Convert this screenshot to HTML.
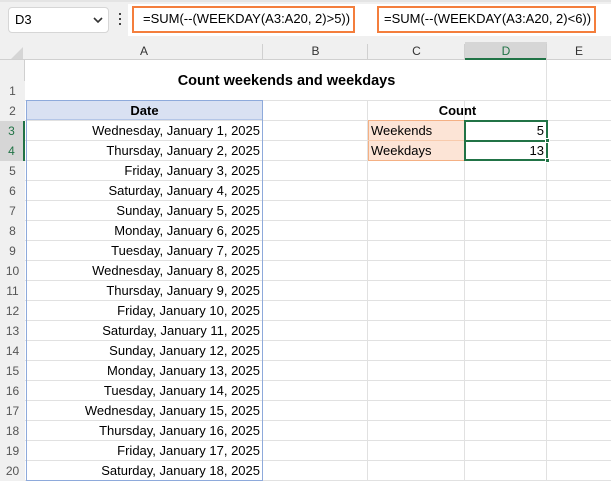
<!DOCTYPE html>
<html><head><style>
*{margin:0;padding:0;box-sizing:border-box}
body{width:611px;height:481px;overflow:hidden;background:#fff;font-family:"Liberation Sans",sans-serif;position:relative;color:#000}
.a{position:absolute}
.cell{position:absolute;font-size:13px;line-height:20px;white-space:nowrap}
.vl{position:absolute;width:1px;background:#e1e1e1}
.hl{position:absolute;height:1px;background:#e1e1e1}
.rh{position:absolute;left:0;width:25px;text-align:center;font-size:12px;color:#555;line-height:20px;background:#f0f0f0}
</style></head><body>
<div class="a" style="left:0;top:0;width:611px;height:42px;background:#f0f0f0"></div>
<div class="a" style="left:0;top:0;width:611px;height:2px;background:#e4e4e4"></div>
<div class="a" style="left:8px;top:7px;width:101px;height:26px;background:#fff;border:1px solid #d6d6d6;border-radius:4px"></div>
<div class="cell" style="left:15px;top:10px;font-size:13px">D3</div>
<svg class="a" style="left:93px;top:16px" width="10" height="8"><path d="M1 2 L5 6 L9 2" stroke="#333" stroke-width="1.6" fill="none"/></svg>
<div class="a" style="left:119px;top:13px;width:2px;height:2px;background:#444"></div>
<div class="a" style="left:119px;top:18px;width:2px;height:2px;background:#444"></div>
<div class="a" style="left:119px;top:23px;width:2px;height:2px;background:#444"></div>
<div class="a" style="left:128px;top:4px;width:483px;height:32px;background:#fff"></div>
<div class="a" style="left:132px;top:6px;width:223px;height:27px;border:2px solid #f47e3c"></div>
<div class="cell" style="left:143px;top:9px">=SUM(--(WEEKDAY(A3:A20, 2)&gt;5))</div>
<div class="a" style="left:377px;top:6px;width:219px;height:27px;border:2px solid #f47e3c"></div>
<div class="cell" style="left:384px;top:9px">=SUM(--(WEEKDAY(A3:A20, 2)&lt;6))</div>

<div class="a" style="left:0;top:42px;width:611px;height:18px;background:#f0f0f0;border-bottom:1px solid #d0d0d0"></div>
<svg class="a" style="left:8px;top:47px" width="16" height="12"><path d="M15 0 L15 12 L3 12 Z" fill="#d5d5d5"/></svg>
<div class="a" style="left:465px;top:42px;width:82px;height:18px;background:#d6d6d6;border-bottom:2px solid #217346"></div>
<div class="cell" style="left:25px;top:41px;width:238px;text-align:center;font-size:12px;color:#333">A</div>
<div class="cell" style="left:263px;top:41px;width:105px;text-align:center;font-size:12px;color:#333">B</div>
<div class="cell" style="left:368px;top:41px;width:97px;text-align:center;font-size:12px;color:#333">C</div>
<div class="cell" style="left:465px;top:41px;width:82px;text-align:center;font-size:12px;color:#217346">D</div>
<div class="cell" style="left:547px;top:41px;width:64px;text-align:center;font-size:12px;color:#333">E</div>
<div class="vl" style="left:262px;top:44px;height:16px;background:#d0d0d0"></div>
<div class="vl" style="left:367px;top:44px;height:16px;background:#d0d0d0"></div>
<div class="vl" style="left:464px;top:44px;height:16px;background:#d0d0d0"></div>
<div class="vl" style="left:546px;top:44px;height:16px;background:#d0d0d0"></div>

<div class="a" style="left:0;top:60px;width:25px;height:421px;background:#f0f0f0;border-right:1px solid #d0d0d0"></div>

<div class="vl" style="left:262px;top:60px;height:421px"></div>
<div class="vl" style="left:367px;top:60px;height:421px"></div>
<div class="vl" style="left:464px;top:60px;height:421px"></div>
<div class="vl" style="left:546px;top:60px;height:421px"></div>
<div class="hl" style="left:0;top:100px;width:611px"></div>
<div class="hl" style="left:0;top:120px;width:611px"></div>
<div class="hl" style="left:0;top:140px;width:611px"></div>
<div class="hl" style="left:0;top:160px;width:611px"></div>
<div class="hl" style="left:0;top:180px;width:611px"></div>
<div class="hl" style="left:0;top:200px;width:611px"></div>
<div class="hl" style="left:0;top:220px;width:611px"></div>
<div class="hl" style="left:0;top:240px;width:611px"></div>
<div class="hl" style="left:0;top:260px;width:611px"></div>
<div class="hl" style="left:0;top:280px;width:611px"></div>
<div class="hl" style="left:0;top:300px;width:611px"></div>
<div class="hl" style="left:0;top:320px;width:611px"></div>
<div class="hl" style="left:0;top:340px;width:611px"></div>
<div class="hl" style="left:0;top:360px;width:611px"></div>
<div class="hl" style="left:0;top:380px;width:611px"></div>
<div class="hl" style="left:0;top:400px;width:611px"></div>
<div class="hl" style="left:0;top:420px;width:611px"></div>
<div class="hl" style="left:0;top:440px;width:611px"></div>
<div class="hl" style="left:0;top:460px;width:611px"></div>
<div class="hl" style="left:0;top:480px;width:611px"></div>
<div class="a" style="left:26px;top:60px;width:585px;height:40px;background:#fff"></div>
<div class="vl" style="left:546px;top:60px;height:40px"></div>

<div class="rh" style="top:81px">1</div>
<div class="rh" style="top:101px">2</div>
<div class="rh" style="top:121px;background:#d6d6d6;color:#217346;border-right:2px solid #217346">3</div>
<div class="rh" style="top:141px;background:#d6d6d6;color:#217346;border-right:2px solid #217346">4</div>
<div class="rh" style="top:161px">5</div>
<div class="rh" style="top:181px">6</div>
<div class="rh" style="top:201px">7</div>
<div class="rh" style="top:221px">8</div>
<div class="rh" style="top:241px">9</div>
<div class="rh" style="top:261px">10</div>
<div class="rh" style="top:281px">11</div>
<div class="rh" style="top:301px">12</div>
<div class="rh" style="top:321px">13</div>
<div class="rh" style="top:341px">14</div>
<div class="rh" style="top:361px">15</div>
<div class="rh" style="top:381px">16</div>
<div class="rh" style="top:401px">17</div>
<div class="rh" style="top:421px">18</div>
<div class="rh" style="top:441px">19</div>
<div class="rh" style="top:461px">20</div>

<div class="cell" style="left:26px;top:71px;width:521px;text-align:center;font-weight:bold;font-size:14.5px">Count weekends and weekdays</div>

<div class="a" style="left:26px;top:100px;width:237px;height:381px;border:1px solid #8eaadb"></div>
<div class="a" style="left:27px;top:101px;width:235px;height:19px;background:#d9e1f2;border-bottom:1px solid #b4c6e7"></div>
<div class="cell" style="left:26px;top:101px;width:237px;text-align:center;font-weight:bold">Date</div>

<div class="cell" style="left:26px;top:121px;width:234px;text-align:right">Wednesday, January 1, 2025</div>
<div class="cell" style="left:26px;top:141px;width:234px;text-align:right">Thursday, January 2, 2025</div>
<div class="cell" style="left:26px;top:161px;width:234px;text-align:right">Friday, January 3, 2025</div>
<div class="cell" style="left:26px;top:181px;width:234px;text-align:right">Saturday, January 4, 2025</div>
<div class="cell" style="left:26px;top:201px;width:234px;text-align:right">Sunday, January 5, 2025</div>
<div class="cell" style="left:26px;top:221px;width:234px;text-align:right">Monday, January 6, 2025</div>
<div class="cell" style="left:26px;top:241px;width:234px;text-align:right">Tuesday, January 7, 2025</div>
<div class="cell" style="left:26px;top:261px;width:234px;text-align:right">Wednesday, January 8, 2025</div>
<div class="cell" style="left:26px;top:281px;width:234px;text-align:right">Thursday, January 9, 2025</div>
<div class="cell" style="left:26px;top:301px;width:234px;text-align:right">Friday, January 10, 2025</div>
<div class="cell" style="left:26px;top:321px;width:234px;text-align:right">Saturday, January 11, 2025</div>
<div class="cell" style="left:26px;top:341px;width:234px;text-align:right">Sunday, January 12, 2025</div>
<div class="cell" style="left:26px;top:361px;width:234px;text-align:right">Monday, January 13, 2025</div>
<div class="cell" style="left:26px;top:381px;width:234px;text-align:right">Tuesday, January 14, 2025</div>
<div class="cell" style="left:26px;top:401px;width:234px;text-align:right">Wednesday, January 15, 2025</div>
<div class="cell" style="left:26px;top:421px;width:234px;text-align:right">Thursday, January 16, 2025</div>
<div class="cell" style="left:26px;top:441px;width:234px;text-align:right">Friday, January 17, 2025</div>
<div class="cell" style="left:26px;top:461px;width:234px;text-align:right">Saturday, January 18, 2025</div>

<div class="cell" style="left:368px;top:101px;width:179px;text-align:center;font-weight:bold">Count</div>
<div class="a" style="left:368px;top:120px;width:97px;height:41px;background:#fce4d6;border:1px solid #f4b084"></div>
<div class="hl" style="left:368px;top:140px;width:97px;background:#f8cbad"></div>
<div class="cell" style="left:371px;top:121px">Weekends</div>
<div class="cell" style="left:371px;top:141px">Weekdays</div>
<div class="a" style="left:464px;top:120px;width:84px;height:22px;border:2px solid #217346"></div>
<div class="a" style="left:464px;top:140px;width:84px;height:21px;border:2px solid #217346"></div>
<div class="a" style="left:545px;top:138px;width:5px;height:5px;background:#217346;border:1px solid #fff"></div>
<div class="a" style="left:545px;top:158px;width:5px;height:5px;background:#217346;border:1px solid #fff"></div>
<div class="cell" style="left:465px;top:121px;width:79px;text-align:right">5</div>
<div class="cell" style="left:465px;top:141px;width:79px;text-align:right">13</div>
</body></html>
